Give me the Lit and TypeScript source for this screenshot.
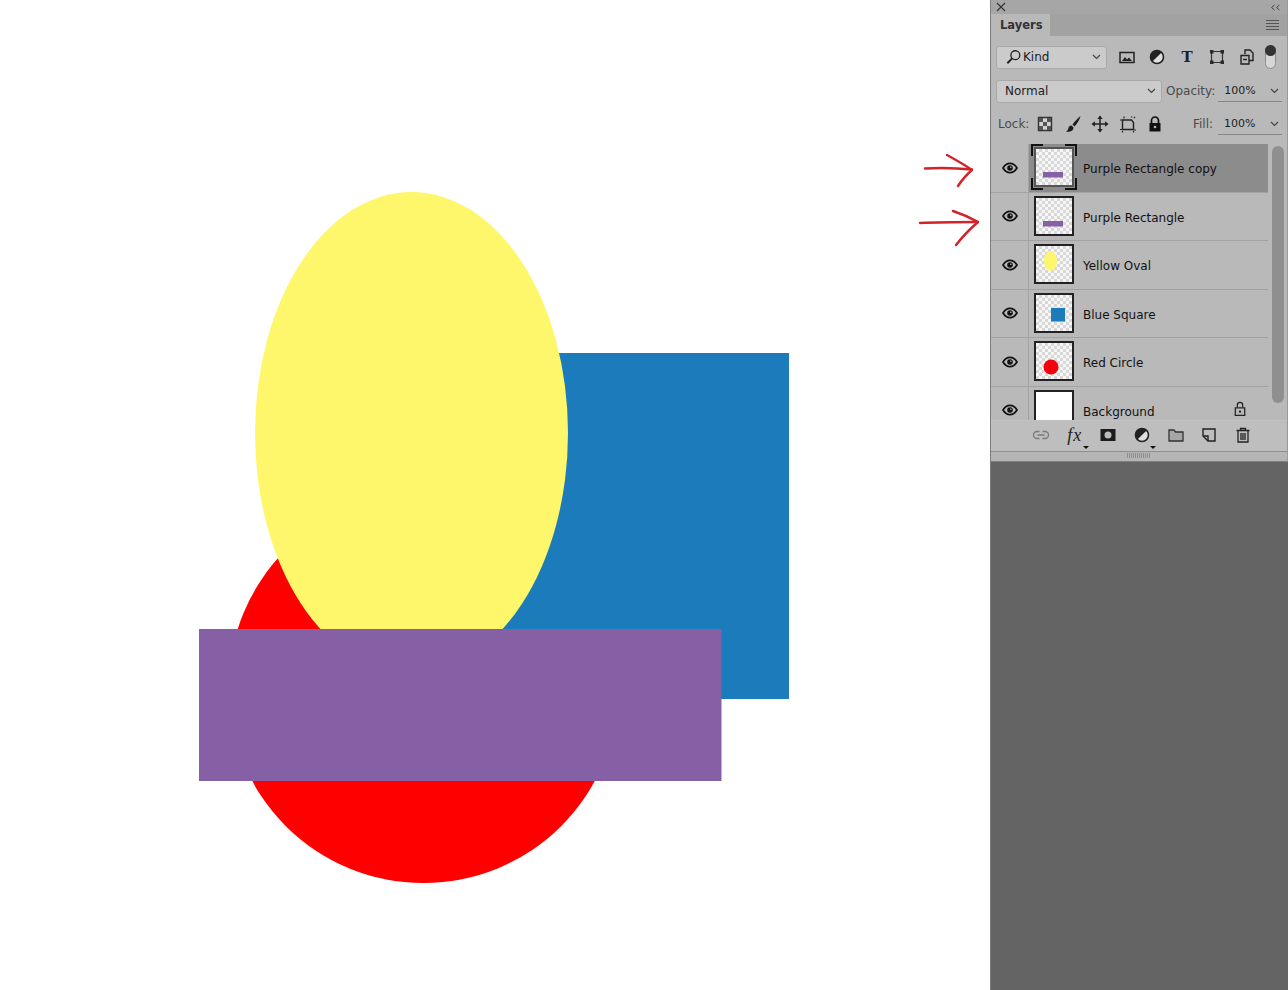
import { LitElement, html, css, svg } from 'lit'
import { customElement } from 'lit/decorators.js'

type Layer = { name: string; thumb: ReturnType<typeof svg> | null; selected?: boolean; locked?: boolean }

const purpleThumb = svg`<rect x="7" y="23" width="20" height="5.500" fill="#8560a5"/>`

const layers: Layer[] = [
  { name: 'Purple Rectangle copy', thumb: purpleThumb, selected: true },
  { name: 'Purple Rectangle', thumb: purpleThumb },
  { name: 'Yellow Oval', thumb: svg`<ellipse cx="14.500" cy="15" rx="6.500" ry="10" fill="#fef76c"/>` },
  { name: 'Blue Square', thumb: svg`<rect x="15" y="13" width="14" height="13.500" fill="#1b7bbb"/>` },
  { name: 'Red Circle', thumb: svg`<circle cx="15" cy="24" r="7.500" fill="#f4000e"/>` },
  { name: 'Background', thumb: null, locked: true },
]

const icon = (body: ReturnType<typeof svg>, size = 18) => html`
  <svg width=${size} height=${size} viewBox="0 0 18 18" fill="none">${body}</svg>
`

const chevron = html`
  <svg class="chev" width="9" height="6" viewBox="0 0 9 6" fill="none">
    <path d="M1 1l3.500 3.500L8 1" stroke="#444" stroke-width="1.200"/>
  </svg>
`

const eye = html`
  <svg width="16" height="12" viewBox="0 0 16 12" fill="none">
    <path d="M1 6c2-3.200 4.400-4.600 7-4.600s5 1.400 7 4.600c-2 3.200-4.400 4.600-7 4.600S3 9.200 1 6z" stroke="#111" stroke-width="1.700"/>
    <circle cx="8" cy="6" r="2.800" fill="#111"/>
    <circle cx="8.800" cy="5.200" r=".8" fill="#bbb"/>
  </svg>
`

const halfCircle = svg`
  <circle cx="9" cy="9" r="6.500" fill="#dedede" stroke="#222" stroke-width="1.600"/>
  <path d="M13.600 4.400A6.500 6.500 0 0 0 4.400 13.600z" fill="#222"/>
`

const filterIcons = [
  svg`<path d="M2 4.500h14v10H2z" stroke="#222" stroke-width="1.500"/><path d="M4 13l3-4 2 2.500 2-2 3 3.500z" fill="#222"/>`,
  halfCircle,
  null,
  svg`<path d="M3.500 3.500h11v11h-11z" stroke="#333" stroke-width="1.200"/><path d="M2 2h3.500v3.500H2zM12.500 2H16v3.500h-3.500zM2 12.500h3.500V16H2zM12.500 12.500H16V16h-3.500z" fill="#2a2a2a"/>`,
  svg`<path d="M7 6V2h5l3 3v7.500h-4" stroke="#222" stroke-width="1.400"/><path d="M3 7.500h8V16H3z" stroke="#222" stroke-width="1.400"/><path d="M5 11.500h4" stroke="#222" stroke-width="1.400"/>`,
]

const lockIcons = [
  svg`<path d="M2.500 2.500h13v13h-13z" fill="#d0d0d0" stroke="#333" stroke-width="1.400"/><path d="M3 3h4v4H3zM11 3h4v4h-4zM7 7h4v4H7zM3 11h4v4H3zM11 11h4v4h-4z" fill="#555"/>`,
  svg`<path d="M16.500 1C14 3 10.500 6.500 8.500 9.500l2 2C13 9 15.500 5 16.500 1z" fill="#1c1c1c"/><path d="M7.500 10.500c-2.500 0-3 2-3.300 3.500-.2 1-1 1.800-2.200 2.500 3 .6 7.500 0 7.500-4z" fill="#1c1c1c"/>`,
  svg`<path d="M9 1.500v15M1.500 9h15" stroke="#222" stroke-width="1.500"/><path d="M9 .5L6.300 4h5.400zM9 17.500L6.300 14h5.400zM.5 9L4 6.300v5.400zM17.500 9L14 6.300v5.400z" fill="#222"/>`,
  svg`<path d="M3.500 5h9l2 2.500v7h-11z" stroke="#222" stroke-width="1.400"/><path d="M1 5h2M5 1.500v2M15 15h2M14.500 16v1.500M1 14.500h2M3.500 16v1.500M15 3l1-1M12.500 2.500l.5-1" stroke="#222" stroke-width="1.200"/>`,
  svg`<path d="M5.500 8V5.500a3.500 3.500 0 0 1 7 0V8" stroke="#111" stroke-width="1.700"/><path d="M3.500 8h11v8.500h-11z" fill="#111"/><circle cx="9" cy="12" r="1.300" fill="#b8b8b8"/>`,
]

@customElement('app-root')
export class AppRoot extends LitElement {
  static styles = css`
    :host {
      display: block;
      width: 1288px;
      height: 990px;
      overflow: hidden;
      font-family: "DejaVu Sans", sans-serif;
      color: #161616;
    }

    .page {
      display: grid;
      grid-template-columns: 990px 298px;
      height: 990px;
      background: #fff;
    }

    .canvas {
      display: block;
    }

    .dock {
      background: #646464;
      border-left: 1px solid #7d7d7d;
    }

    .panel {
      height: 462px;
      background: #b9b9b9;
      border-bottom: 1px solid #7f7f7f;
      box-sizing: border-box;
      display: flex;
      flex-direction: column;
      border-right: 1px solid #9a9a9a;
    }

    .strip {
      height: 14px;
      background: #a6a6a6;
      display: flex;
      align-items: center;
      justify-content: space-between;
      padding: 0 6px 0 5px;
    }

    .tabs {
      height: 22px;
      background: #a2a2a2;
      display: flex;
      align-items: center;
      justify-content: space-between;
      padding-right: 8px;
    }

    .tab {
      width: 59px;
      height: 22px;
      background: #b9b9b9;
      font-size: 11.500px;
      font-weight: 700;
      color: #333;
      line-height: 22px;
      padding-left: 9px;
      box-sizing: border-box;
    }

    .menu {
      width: 13px;
      height: 10px;
      background: repeating-linear-gradient(#555 0 1px, transparent 1px 3px);
    }

    .ctrl {
      display: flex;
      align-items: center;
      padding-left: 5px;
      box-sizing: border-box;
      font-size: 12px;
    }

    .c1 { height: 42px; }
    .c2 { height: 26px; }
    .c3 { height: 40px; padding-left: 7px; }

    .select {
      height: 23px;
      background: #cbcbcb;
      border: 1px solid #a9a9a9;
      border-radius: 3px;
      display: flex;
      align-items: center;
      justify-content: space-between;
      box-sizing: border-box;
      padding: 0 5px 0 9px;
      font-size: 12px;
      color: #1d1d1d;
    }

    .kind {
      width: 111px;
      padding-left: 9px;
      margin-right: 11px;
    }

    .kind span {
      display: flex;
      align-items: center;
      gap: 1px;
    }

    .blend {
      width: 166px;
      margin-right: 4px;
      padding-left: 8px;
    }

    .icons {
      display: flex;
      gap: 12px;
      align-items: center;
    }

    .t {
      width: 18px;
      text-align: center;
      font: 700 15px/18px "DejaVu Serif", serif;
      color: #222;
    }

    .toggle {
      width: 11px;
      height: 24px;
      margin-left: 9px;
      border: 1px solid #8c8c8c;
      border-radius: 6px;
      background: #d6d6d6;
      box-sizing: border-box;
      display: flex;
    }

    .toggle i {
      width: 11px;
      height: 11px;
      margin: -1px;
      border-radius: 50%;
      background: #333;
    }

    .label {
      color: #4a4a4a;
    }

    .value {
      width: 64px;
      height: 22px;
      border-bottom: 1px solid #858585;
      margin-left: 3px;
      padding: 0 3px 0 6px;
      box-sizing: border-box;
      display: flex;
      align-items: center;
      justify-content: space-between;
      color: #1d1d1d;
      font-size: 11px;
    }

    .lock-label {
      width: 38px;
    }

    .lock-icons {
      gap: 9.500px;
      width: 157px;
    }

    .fill-label {
      width: 22px;
    }

    .list {
      height: 276px;
      display: flex;
      overflow: hidden;
      box-sizing: border-box;
    }

    .rows {
      width: 277px;
      flex: none;
    }

    .row {
      height: 48.500px;
      display: flex;
      align-items: center;
      border-bottom: 1px solid #a2a2a2;
      box-sizing: border-box;
      font-size: 12px;
      color: #111;
    }

    .row.selected {
      background: #8c8c8c;
    }

    .eye {
      width: 38px;
      height: 100%;
      flex: none;
      box-sizing: border-box;
      border-right: 1px solid #a4a4a4;
      background: #b9b9b9;
      display: flex;
      align-items: center;
      justify-content: center;
    }

    .frame {
      margin: -1px 0 0 2px;
      padding: 3px;
      flex: none;
    }

    .selected .frame {
      background:
        linear-gradient(#111, #111) 0 0 / 12px 2px,
        linear-gradient(#111, #111) 0 0 / 2px 12px,
        linear-gradient(#111, #111) 100% 0 / 12px 2px,
        linear-gradient(#111, #111) 100% 0 / 2px 12px,
        linear-gradient(#111, #111) 0 100% / 12px 2px,
        linear-gradient(#111, #111) 0 100% / 2px 12px,
        linear-gradient(#111, #111) 100% 100% / 12px 2px,
        linear-gradient(#111, #111) 100% 100% / 2px 12px;
      background-repeat: no-repeat;
    }

    .thumb {
      width: 40px;
      height: 40px;
      border: 2px solid #222;
      box-sizing: border-box;
      background: #f3f3f3 repeating-conic-gradient(#d8d8d8 0 25%, #f6f6f6 0 50%) 0 0 / 6px 6px;
    }

    .selected .thumb {
      border-color: #555;
    }

    .thumb.blank {
      background: #fff;
    }

    .thumb svg {
      display: block;
    }

    .name {
      margin-left: 6px;
      padding-top: 3px;
      flex: 1;
    }

    .row-lock {
      margin-right: 20px;
    }

    .bar {
      flex: 1;
      padding: 2px 4px;
    }

    .bar i {
      display: block;
      width: 12px;
      height: 257px;
      border-radius: 6px;
      background: #8f8f8f;
    }

    .footer {
      height: 32px;
      padding: 0 0 2px 41px;
      box-sizing: border-box;
      display: flex;
      align-items: center;
      gap: 15.700px;
      border-top: 1px solid #c2c2c2;
      border-bottom: 1px solid #8f8f8f;
      background: #bebebe;
    }

    .fx {
      width: 18px;
      text-align: center;
      font: italic 18px/18px "Liberation Serif", serif;
      letter-spacing: 1px;
      color: #222;
    }

    .more {
      position: relative;
      height: 18px;
    }

    .more::after {
      content: "";
      position: absolute;
      right: -5px;
      bottom: -5px;
      border-left: 3px solid transparent;
      border-right: 3px solid transparent;
      border-top: 3px solid #111;
    }

    .grip {
      flex: 1;
      display: flex;
      justify-content: center;
      align-items: flex-start;
      padding-top: 1px;
      background: #b5b5b5;
    }

    .grip i {
      width: 24px;
      height: 5px;
      background: repeating-linear-gradient(90deg, #8e8e8e 0 1px, transparent 1px 2px);
    }
  `

  private renderRow(layer: Layer) {
    return html`
      <div class="row ${layer.selected ? 'selected' : ''}">
        <div class="eye">${eye}</div>
        <div class="frame">
          <div class="thumb ${layer.thumb ? '' : 'blank'}">
            ${layer.thumb
              ? html`<svg width="36" height="36" viewBox="0 0 36 36">${layer.thumb}</svg>`
              : null}
          </div>
        </div>
        <div class="name">${layer.name}</div>
        ${layer.locked
          ? html`<div class="row-lock">
              ${icon(svg`<path d="M6 7V4.500a3 3 0 0 1 6 0V7" stroke="#222" stroke-width="1.400"/><path d="M3.700 7.700h10.600v8.600H3.700z" stroke="#222" stroke-width="1.400"/><circle cx="9" cy="12" r="1.300" fill="#222"/>`, 16)}
            </div>`
          : null}
      </div>
    `
  }

  render() {
    return html`
      <div class="page">
        <svg class="canvas" width="990" height="990" viewBox="0 0 990 990">
          <circle cx="423.500" cy="688" r="195" fill="#fe0000"/>
          <rect x="450" y="353" width="339" height="346" fill="#1b7bbb"/>
          <ellipse cx="411.500" cy="433" rx="156.500" ry="241" fill="#fef76c"/>
          <rect x="199" y="629" width="522.500" height="152" fill="#8560a5"/>
          <g fill="none" stroke="#d2222a" stroke-width="2.400" stroke-linecap="round" stroke-linejoin="round">
            <path d="M925 168.500c16-1 32-.5 47 1"/>
            <path d="M947 155c9 5 18 10 25 15-6 5-10 10-14 16"/>
            <path d="M920 223c20-1 40-1 58-1"/>
            <path d="M953 211c9 3 18 7 25 11-8 7-15 14-22 23"/>
          </g>
        </svg>
        <div class="dock">
          <div class="panel">
            <div class="strip">
              <svg width="10" height="10" viewBox="0 0 10 10" fill="none">
                <path d="M1 1l8 8M9 1l-8 8" stroke="#333" stroke-width="1.100"/>
              </svg>
              <svg width="11" height="7" viewBox="0 0 11 7" fill="none">
                <path d="M4.500 1L1.500 3.500l3 2.500M9.500 1l-3 2.500 3 2.500" stroke="#444" stroke-width="1"/>
              </svg>
            </div>
            <div class="tabs">
              <div class="tab">Layers</div>
              <div class="menu"></div>
            </div>
            <div class="ctrl c1">
              <div class="select kind">
                <span>
                  ${icon(svg`<circle cx="10.500" cy="7" r="5" stroke="#222" stroke-width="1.500"/><path d="M7 10.500L1.500 16" stroke="#222" stroke-width="2.200"/>`, 16)}Kind
                </span>
                ${chevron}
              </div>
              <div class="icons">
                ${filterIcons.map(i => i ? icon(i) : html`<div class="t">T</div>`)}
              </div>
              <div class="toggle"><i></i></div>
            </div>
            <div class="ctrl c2">
              <div class="select blend"><span>Normal</span>${chevron}</div>
              <span class="label">Opacity:</span>
              <div class="value"><span>100%</span>${chevron}</div>
            </div>
            <div class="ctrl c3">
              <span class="label lock-label">Lock:</span>
              <div class="icons lock-icons">${lockIcons.map(i => icon(i))}</div>
              <span class="label fill-label">Fill:</span>
              <div class="value"><span>100%</span>${chevron}</div>
            </div>
            <div class="list">
              <div class="rows">${layers.map(l => this.renderRow(l))}</div>
              <div class="bar"><i></i></div>
            </div>
            <div class="footer">
              ${icon(svg`<path d="M7.500 5.500H5a3.500 3.500 0 0 0 0 7h2.500M10.500 5.500H13a3.500 3.500 0 0 1 0 7h-2.500M5.500 9h7" stroke="#7a7a7a" stroke-width="1.300"/>`)}
              <div class="fx more">fx</div>
              ${icon(svg`<path d="M1.500 3h15v12h-15z" fill="#1c1c1c"/><circle cx="9" cy="9" r="3.500" fill="#bbb"/>`)}
              <div class="more">
                ${icon(halfCircle)}
              </div>
              ${icon(svg`<path d="M2 4h5l1.500 2H16v9H2z" fill="#a6a6a6" stroke="#333" stroke-width="1.300"/>`)}
              ${icon(svg`<path d="M3 3h12v12H8l-5-5z" stroke="#222" stroke-width="1.400"/><path d="M8 15v-5H3" stroke="#222" stroke-width="1.400"/>`)}
              ${icon(svg`<path d="M2.500 4.500h13M6.500 4.500V2.500h5v2M4 4.500v11.500h10V4.500M7 7v7M9 7v7M11 7v7" stroke="#222" stroke-width="1.300"/>`)}
            </div>
            <div class="grip"><i></i></div>
          </div>
        </div>
      </div>
    `
  }
}
